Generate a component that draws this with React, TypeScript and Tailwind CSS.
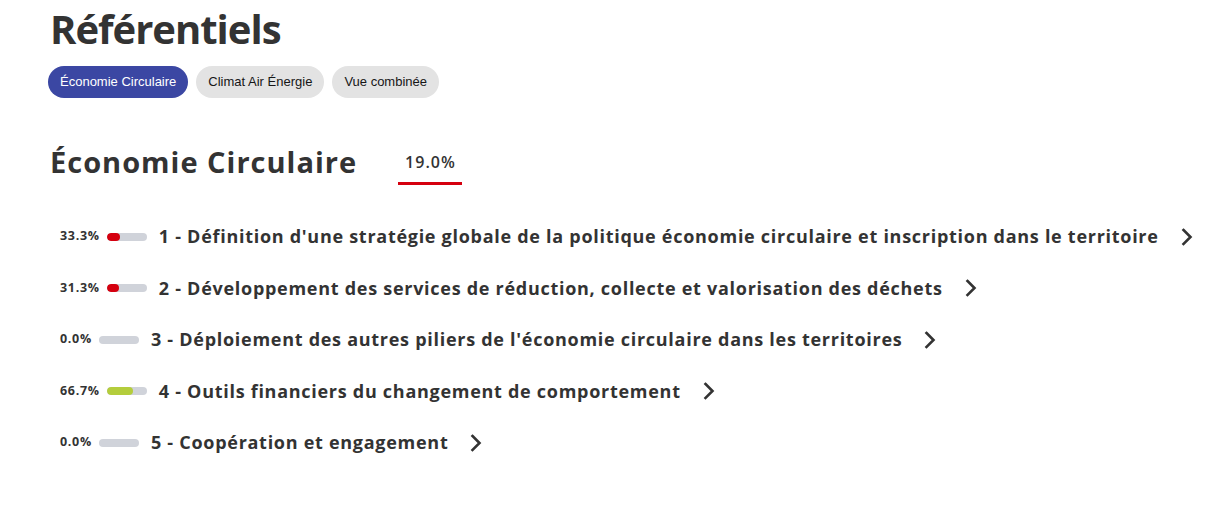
import React from 'react'

const themes = [
  { pct: 33.3, color: 'bg-[#d5000f]', label: "1 - Définition d'une stratégie globale de la politique économie circulaire et inscription dans le territoire" },
  { pct: 31.3, color: 'bg-[#d5000f]', label: '2 - Développement des services de réduction, collecte et valorisation des déchets' },
  { pct: 0, color: 'bg-[#d5000f]', label: "3 - Déploiement des autres piliers de l'économie circulaire dans les territoires" },
  { pct: 66.7, color: 'bg-[#b4cd3c]', label: '4 - Outils financiers du changement de comportement' },
  { pct: 0, color: 'bg-[#d5000f]', label: '5 - Coopération et engagement' },
]

function Chevron() {
  return (
    <svg width="12" height="18" viewBox="0 0 12 18" fill="none" className="shrink-0">
      <path d="M2.5 2 L9.5 9 L2.5 16" stroke="#333" strokeWidth="2.6" strokeLinecap="square" />
    </svg>
  )
}

export default function App() {
  return (
    <div className="min-h-screen bg-white text-[#333] font-['Open_Sans','Noto_Sans',sans-serif] pl-12 pr-2 pt-[5px]">
      <h1 className="text-[40px] leading-[48px] font-bold ml-[2px] tracking-[-1px]">Référentiels</h1>
      <div className="flex gap-2 mt-[13px] font-['Liberation_Sans',Arial,sans-serif] text-[13px]">
        <button className="h-8 px-3 rounded-full bg-[#3b47a3] text-white">Économie Circulaire</button>
        <button className="h-8 px-3 rounded-full bg-[#e3e3e3] text-[#161616]">Climat Air Énergie</button>
        <button className="h-8 px-3 rounded-full bg-[#e3e3e3] text-[#161616]">Vue combinée</button>
      </div>

      <div className="flex items-start mt-[44px] ml-[2px]">
        <h2 className="text-[29px] leading-[40px] font-bold tracking-[1px]">Économie Circulaire</h2>
        <div className="ml-[40px] mt-[8px] flex flex-col items-center">
          <span className="text-[16px] leading-[24px] font-semibold tracking-[1px] px-2">19.0%</span>
          <span className="mt-[8px] h-[3px] w-[64px] bg-[#d5000f]" />
        </div>
      </div>

      <ul className="mt-[38px] ml-[12px] flex flex-col gap-[24px]">
        {themes.map((t) => (
          <li key={t.label} className="flex items-center h-[27.5px] whitespace-nowrap">
            <span className="shrink-0 text-[12.5px] font-bold tracking-[0.7px]">{t.pct.toFixed(1)}%</span>
            <span className="shrink-0 ml-[7px] w-[40px] h-[8px] rounded-full bg-[#d0d3da] overflow-hidden">
              <span className={`block h-full rounded-full ${t.color}`} style={{ width: `${t.pct}%` }} />
            </span>
            <span className="shrink-0 ml-[12px] text-[18px] font-bold tracking-[0.72px]">{t.label}</span>
            <span className="shrink-0 ml-[22px]"><Chevron /></span>
          </li>
        ))}
      </ul>
    </div>
  )
}
